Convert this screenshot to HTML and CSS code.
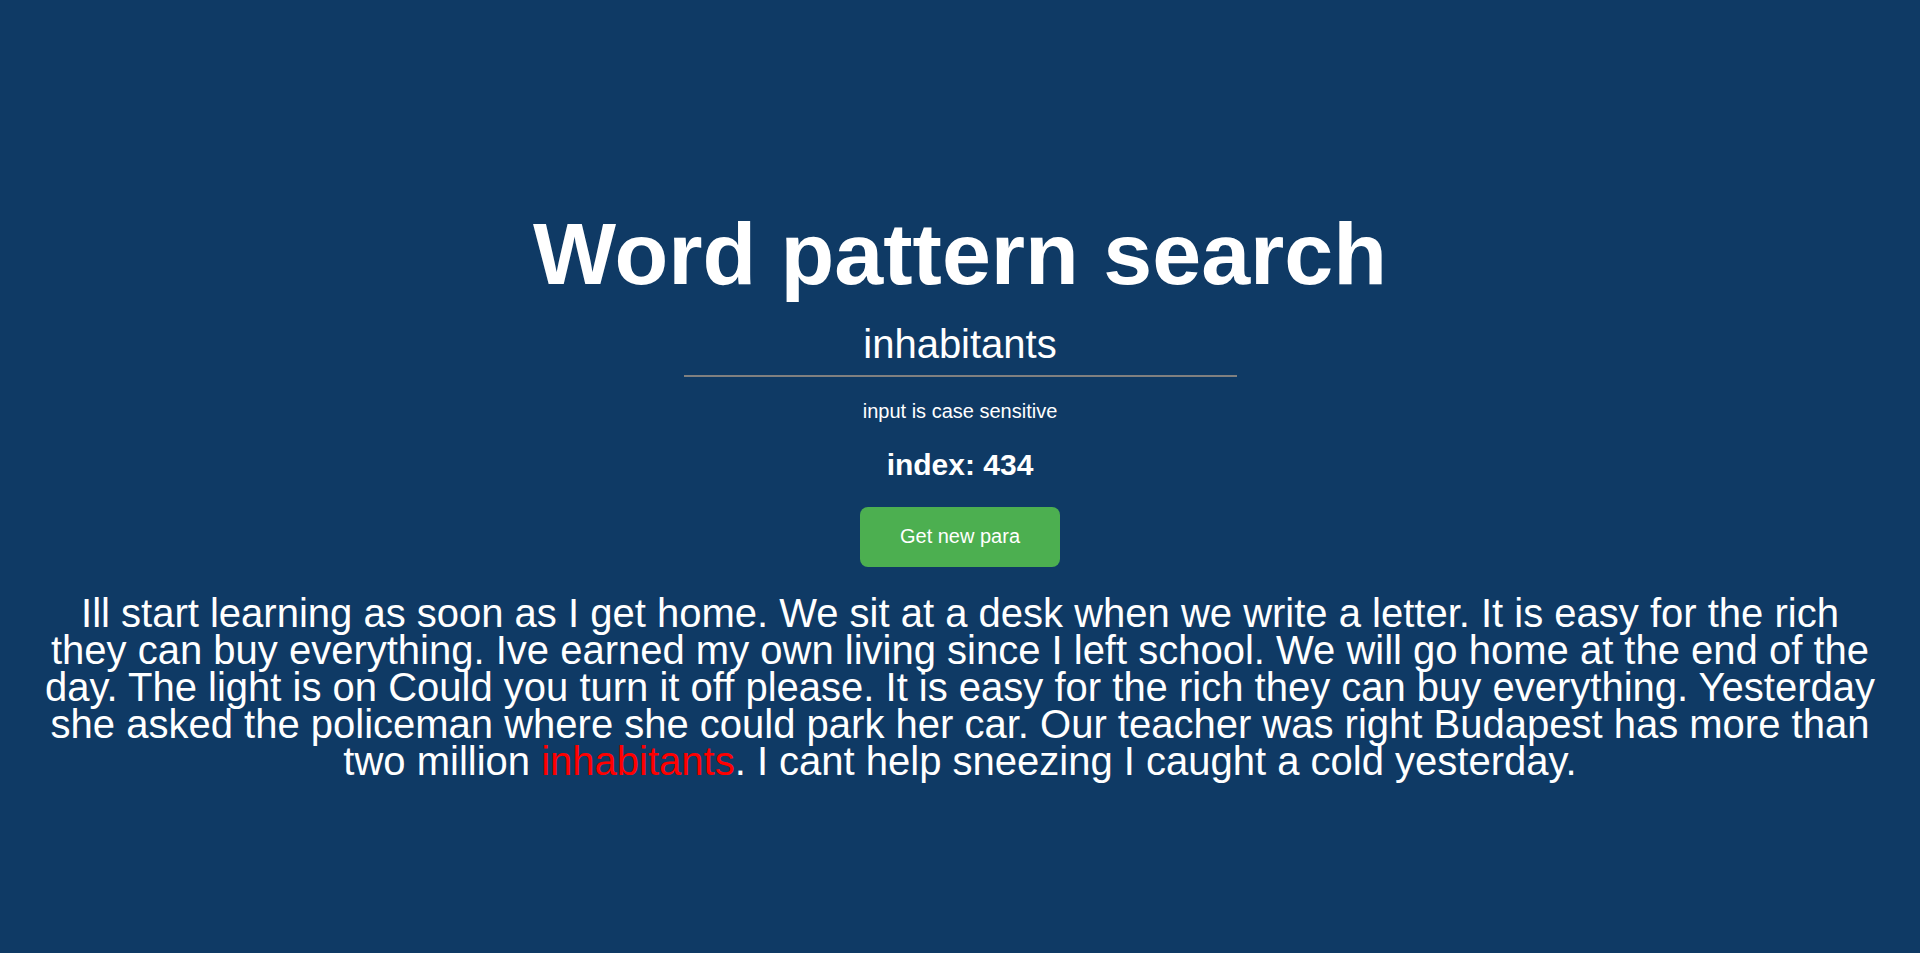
FILE: index.html
```html
<!DOCTYPE html>
<html lang="en">
<head>
<meta charset="utf-8">
<title>Word pattern search</title>
<link rel="stylesheet" href="styles.css">
</head>
<body>
<main class="app">
  <h1 class="title">Word pattern search</h1>
  <input class="search" type="text" value="inhabitants">
  <p class="hint">input is case sensitive</p>
  <h2 class="index">index: 434</h2>
  <button class="btn" type="button">Get new para</button>
  <p class="para">Ill start learning as soon as I get home. We sit at a desk when we write a letter. It is easy for the rich they can buy everything. Ive earned my own living since I left school. We will go home at the end of the day. The light is on Could you turn it off please. It is easy for the rich they can buy everything. Yesterday she asked the policeman where she could park her car. Our teacher was right Budapest has more than two million <span class="match">inhabitants</span>. I cant help sneezing I caught a cold yesterday.</p>
</main>
</body>
</html>
```

FILE: styles.css
```css
html, body {
  margin: 0;
  padding: 0;
  background: #0f3a65;
}
body {
  font-family: "Liberation Sans", Arial, sans-serif;
  color: #ffffff;
}
.app {
  min-height: 100vh;
  box-sizing: border-box;
  display: flex;
  flex-direction: column;
  align-items: center;
  justify-content: center;
  padding: 0;
}
.title {
  font-size: 88px;
  font-weight: bold;
  margin: 61px 0 17px;
  line-height: normal;
}
.search {
  width: 553px;
  box-sizing: border-box;
  font-family: "Liberation Sans", Arial, sans-serif;
  font-size: 40px;
  color: #ffffff;
  background: transparent;
  border: none;
  border-bottom: 2px solid #808080;
  text-align: center;
  padding: 0 0 8px;
  margin: 0;
  outline: none;
}
.hint {
  font-size: 20px;
  margin: 23px 0 0;
}
.index {
  font-size: 30px;
  font-weight: bold;
  margin: 25px 0 0;
}
.btn {
  width: 200px;
  height: 60px;
  margin-top: 25px;
  background: #4caf50;
  color: #ffffff;
  border: none;
  border-radius: 8px;
  font-family: "Liberation Sans", Arial, sans-serif;
  font-size: 20px;
}
.para {
  box-sizing: border-box;
  width: 100%;
  font-size: 40px;
  line-height: 37px;
  text-align: center;
  margin: 28px 0 32px;
  padding: 0 42px;
}
.match {
  color: #ff0000;
}
```
